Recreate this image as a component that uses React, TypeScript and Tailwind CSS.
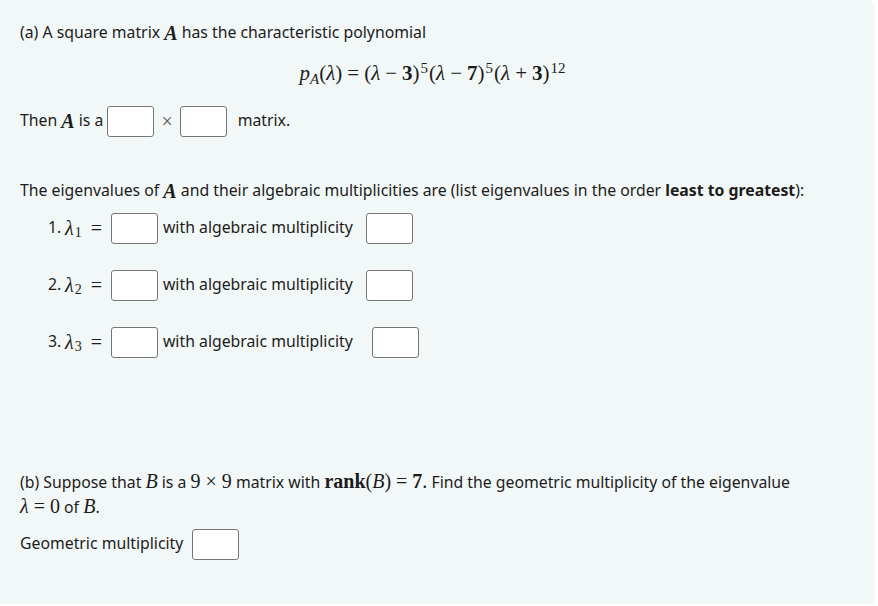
import React from "react";

const M = "font-['Liberation_Serif',serif] text-[20px]";

function Box({ className = "" }: { className?: string }) {
  return (
    <span
      className={`inline-block w-[47px] h-[31px] bg-white border border-[#767676] rounded-[3px] align-middle ${className}`}
    />
  );
}

function Op({ c }: { c: string }) {
  return <span className="mx-[5px]">{c}</span>;
}

function Lam({ n }: { n: number }) {
  return (
    <span className={M}>
      <i>λ</i>
      <sub className="text-[14px] relative top-[2px] ml-[1px]">{n}</sub>
    </span>
  );
}

function EigenRow({ n, last }: { n: number; last?: boolean }) {
  return (
    <div className="h-8 flex items-center pl-[28px]">
      <span className="w-[15px]">{n}.</span>
      <span className="ml-[2px]">
        <Lam n={n} />
      </span>
      <span className={`${M} ml-[9px] mr-[9px]`}>=</span>
      <Box />
      <span className="ml-[5px]">with algebraic multiplicity</span>
      <Box className={last ? "ml-[19px]" : "ml-[13px]"} />
    </div>
  );
}

export default function App() {
  return (
    <div className="w-[878px] h-[606px] bg-white font-['Noto_Sans',sans-serif] text-[15.8px] text-[#1c1c1c]">
      <div className="w-[875px] h-[604px] bg-[#f2f7f7] rounded-tr-lg px-5 pt-[21px]">
        <div className="h-6 flex items-center">
          (a) A square matrix&nbsp;<b className={`${M} italic`}>A</b>&nbsp;has the characteristic polynomial
        </div>
        <div className="mt-[18px] h-6 flex items-center justify-center font-['Liberation_Serif',serif] text-[21px]">
          <span className="ml-[-10px] mt-[-2px]">
            <i>p</i>
            <sub className="italic text-[15px]">A</sub>(<i>λ</i>)<Op c="=" />(<i>λ</i>
            <Op c="−" />
            <b>3</b>)<sup className="text-[15px] ml-[1px] mr-[1px]">5</sup>(<i>λ</i>
            <Op c="−" />
            <b>7</b>)<sup className="text-[15px] ml-[1px] mr-[1px]">5</sup>(<i>λ</i>
            <Op c="+" />
            <b>3</b>)<sup className="text-[15px] ml-[1px]">12</sup>
          </span>
        </div>
        <div className="mt-[18px] h-8 flex items-center">
          <span>Then&nbsp;</span>
          <b className={`${M} italic`}>A</b>
          <span>&nbsp;is a</span>
          <Box className="ml-[4px]" />
          <span className={`${M} mx-[7px] text-[#555]`}>×</span>
          <Box />
          <span className="ml-[11px]">matrix.</span>
        </div>
        <div className="mt-[42px] h-6 flex items-center">
          The eigenvalues of&nbsp;<b className={`${M} italic`}>A</b>&nbsp;and their algebraic multiplicities are (list
          eigenvalues in the order&nbsp;<b>least to greatest</b>):
        </div>
        <div className="mt-[9px] flex flex-col gap-[25px]">
          <EigenRow n={1} />
          <EigenRow n={2} />
          <EigenRow n={3} last />
        </div>
        <div className="mt-[111px] leading-6">
          (b) Suppose that <i className={M}>B</i> is a{" "}
          <span className={M}>
            9<Op c="×" />9
          </span>{" "}
          matrix with{" "}
          <span className={M}>
            <b>rank</b>(<i>B</i>)<Op c="=" />
            <b>7</b>.
          </span>{" "}
          Find the geometric multiplicity of the eigenvalue
          <br />
          <span className={M}>
            <i>λ</i>
            <Op c="=" />0
          </span>{" "}
          of <i className={M}>B</i>.
        </div>
        <div className="mt-[9px] h-8 flex items-center">
          <span>Geometric multiplicity</span>
          <Box className="ml-[9px]" />
        </div>
      </div>
    </div>
  );
}
